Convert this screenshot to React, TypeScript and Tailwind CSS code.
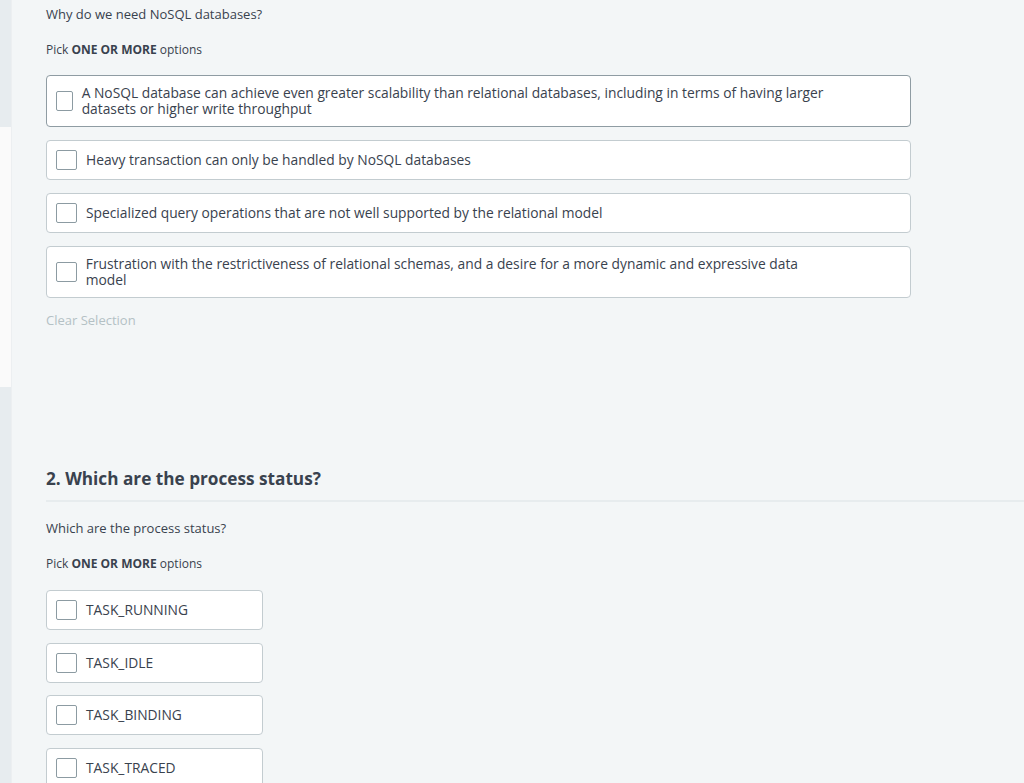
import React from 'react'

const firstOptions = [
  'A NoSQL database can achieve even greater scalability than relational databases, including in terms of having larger datasets or higher write throughput',
  'Heavy transaction can only be handled by NoSQL databases',
  'Specialized query operations that are not well supported by the relational model',
  'Frustration with the restrictiveness of relational schemas, and a desire for a more dynamic and expressive data model',
]

const statusOptions = ['TASK_RUNNING', 'TASK_IDLE', 'TASK_BINDING', 'TASK_TRACED']

function Checkbox() {
  return <span className="h-[20px] w-[21px] rounded-[2px] border border-[#8c9ba2] bg-white" />
}

function PickHint() {
  return (
    <p className="text-[12px] leading-[18px] text-[#39424e]">
      Pick <span className="font-bold">ONE OR MORE</span> options
    </p>
  )
}

export default function App() {
  return (
    <div
      className="flex min-h-screen bg-[#f3f6f7] text-[#39424e]"
      style={{ fontFamily: '"Open Sans", "Noto Sans", sans-serif' }}
    >
      {/* edge of the collapsed side panel */}
      <div className="flex w-[12px] shrink-0 flex-col border-r border-[#eceff1]">
        <div className="h-[127px] bg-[#e7ecef]" />
        <div className="h-[260px] bg-[#fafafa]" />
        <div className="flex-1 bg-[#e7ecef]" />
      </div>

      <main className="flex-1 pl-[34px] pt-[4px]">
        <p className="text-[13px] leading-[20px]">Why do we need NoSQL databases?</p>
        <div className="mt-[17px]">
          <PickHint />
        </div>

        <div className="mt-[16px] flex w-[865px] flex-col gap-[13px]">
          {firstOptions.map((text, i) => (
            <label
              key={text}
              className={`flex items-center gap-[9px] rounded-[4px] border bg-white py-[9px] pl-[9px] pr-[76px] ${
                i === 0 ? 'border-[#8f9ca3]' : 'border-[#c3ccd0]'
              }`}
            >
              <Checkbox />
              <span className="text-[13.8px] leading-[16px]">{text}</span>
            </label>
          ))}
        </div>

        <button className="mt-[12px] block text-[13px] leading-[20px] text-[#b4c1c5]">Clear Selection</button>

        <div className="mt-[137px] border-b-2 border-[#e7ecee] pb-[9px]">
          <h2 className="text-[17.2px] font-bold leading-[24px]">2. Which are the process status?</h2>
        </div>

        <p className="mt-[16px] text-[13px] leading-[20px]">Which are the process status?</p>
        <div className="mt-[17px]">
          <PickHint />
        </div>

        <div className="mt-[17px] flex flex-col gap-[12.7px] pb-[20px]">
          {statusOptions.map((text) => (
            <label
              key={text}
              className="flex w-[217px] items-center gap-[9px] rounded-[4px] border border-[#c3ccd0] bg-white py-[9px] pl-[9px]"
            >
              <Checkbox />
              <span className="text-[13.8px] leading-[16px]">{text}</span>
            </label>
          ))}
        </div>
      </main>
    </div>
  )
}
